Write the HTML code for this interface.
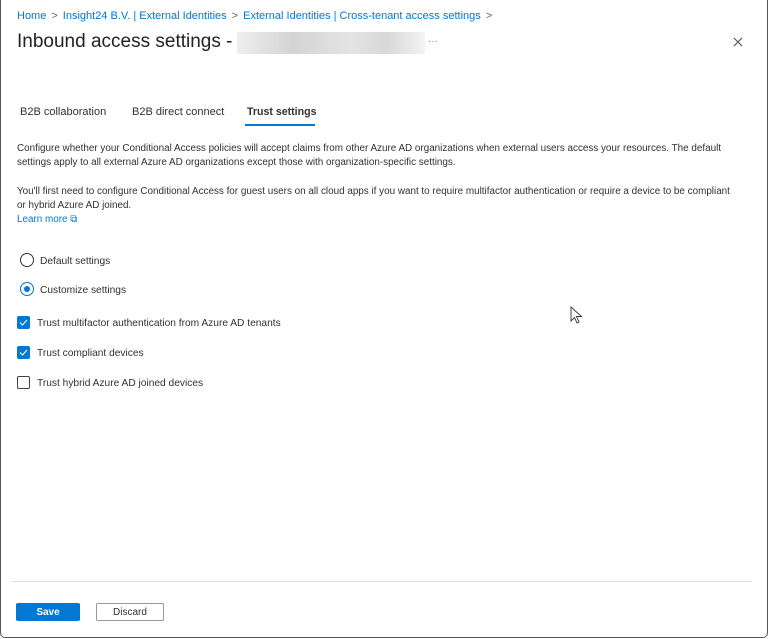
<!DOCTYPE html>
<html><head><style>
body{margin:0;width:768px;height:639px;background:#fff;font-family:"Liberation Sans",sans-serif;color:#323130;overflow:hidden;position:relative}
.frame{position:absolute;left:0;top:0;width:766px;height:637px;border:1px solid #555;border-top:none;border-radius:0 0 5px 5px}
.a{position:absolute;white-space:nowrap}
.bc{top:10px;left:17px;font-size:11px;color:#0078d4}
.bc span{color:#666;margin:0 5px}
.title{top:31px;left:17px;font-size:19px;color:#222}
.blur{position:absolute;left:237px;top:32px;width:188px;height:22px;background:linear-gradient(90deg,#eee,#d4d4d4 30%,#e4e4e4 60%,#d8d8d8 80%,#f4f4f4)}
.tab{top:106px;font-size:11px;color:#323130}
.p{left:17px;font-size:9.9px;line-height:14px;color:#323130;white-space:normal;width:735px}
.rad{position:absolute;left:20px;width:12px;height:12px;border:1px solid #333;border-radius:50%}
.cb{position:absolute;left:17px;width:13px;height:13px;border-radius:2px}
.lbl{font-size:10.2px;color:#323130}
.btn{position:absolute;top:603px;height:18px;font-size:10px;text-align:center;line-height:19px;border-radius:2px;font-weight:bold}
</style></head><body>
<div class="frame"></div>
<div class="a bc">Home<span>&gt;</span>Insight24 B.V. | External Identities<span>&gt;</span>External Identities | Cross-tenant access settings<span>&gt;</span></div>
<div class="a title">Inbound access settings -</div>
<div class="blur"></div>
<div class="a" style="left:428px;top:36px;font-size:10px;color:#888">···</div>
<svg class="a" style="left:733px;top:37px" width="10" height="10"><path d="M1 1L9 9M9 1L1 9" stroke="#555" stroke-width="1.2"/></svg>
<div class="a tab" style="left:20px">B2B collaboration</div>
<div class="a tab" style="left:132px">B2B direct connect</div>
<div class="a tab" style="left:247px;font-weight:bold;font-size:10.6px">Trust settings</div>
<div class="a" style="left:245px;top:124px;width:70px;height:2px;background:#0078d4"></div>
<div class="a p" style="top:142px">Configure whether your Conditional Access policies will accept claims from other Azure AD organizations when external users access your resources. The default settings apply to all external Azure AD organizations except those with organization-specific settings.</div>
<div class="a p" style="top:185px;width:715px">You'll first need to configure Conditional Access for guest users on all cloud apps if you want to require multifactor authentication or require a device to be compliant or hybrid Azure AD joined.<br><span style="color:#0078d4">Learn more ⧉</span></div>
<div class="rad" style="top:253px"></div><div class="a lbl" style="left:40px;top:256px">Default settings</div>
<div class="rad" style="top:282px;border-color:#0078d4"><div style="position:absolute;left:3px;top:3px;width:6px;height:6px;border-radius:50%;background:#0078d4"></div></div><div class="a lbl" style="left:40px;top:285px">Customize settings</div>
<div class="cb" style="top:316px;background:#0078d4"><svg width="13" height="13"><path d="M3 6.5L5.5 9L10 4" stroke="#fff" fill="none" stroke-width="1.1"/></svg></div><div class="a lbl" style="left:37px;top:318px">Trust multifactor authentication from Azure AD tenants</div>
<div class="cb" style="top:346px;background:#0078d4"><svg width="13" height="13"><path d="M3 6.5L5.5 9L10 4" stroke="#fff" fill="none" stroke-width="1.1"/></svg></div><div class="a lbl" style="left:37px;top:348px">Trust compliant devices</div>
<div class="cb" style="top:376px;width:11px;height:11px;border:1px solid #444"></div><div class="a lbl" style="left:37px;top:378px">Trust hybrid Azure AD joined devices</div>
<svg class="a" style="left:570px;top:306px" width="14" height="20"><path d="M1 1L1 15L4.5 11.5L7 17L9 16L6.5 10.5L11.5 10.5Z" fill="#fff" stroke="#333" stroke-width="0.9"/></svg>
<div class="a" style="left:11px;top:581px;width:740px;height:1px;background:#ddd"></div>
<div class="btn" style="left:16px;width:64px;background:#0078d4;color:#fff">Save</div>
<div class="btn" style="left:96px;width:66px;border:1px solid #999;height:16px;line-height:17px;color:#323130;font-weight:normal">Discard</div>
</body></html>
